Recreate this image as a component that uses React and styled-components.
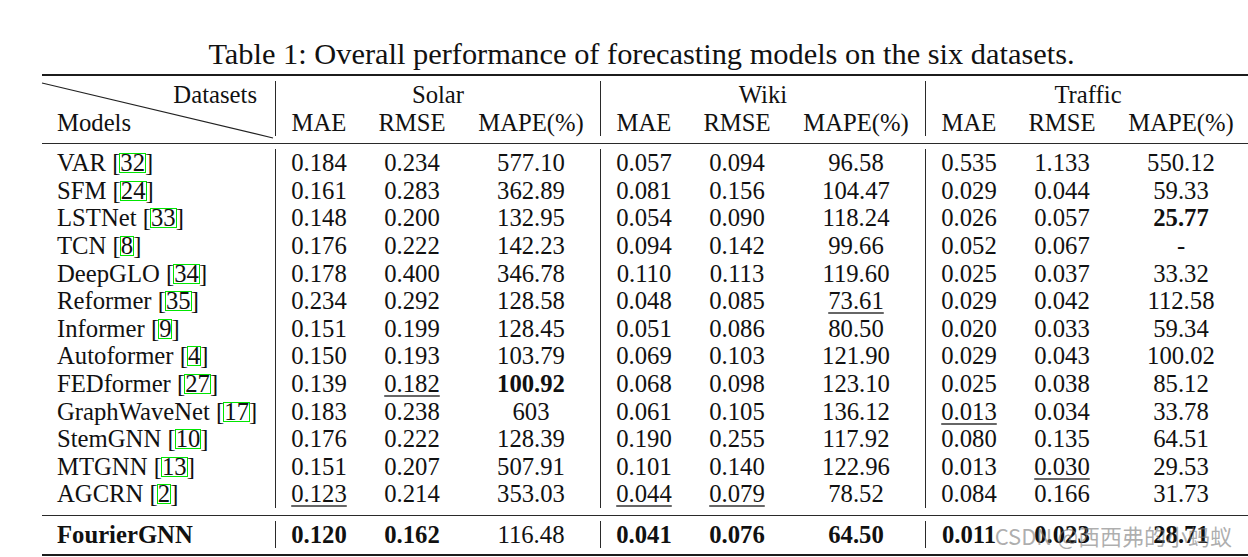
import React from 'react';
import styled, { createGlobalStyle } from 'styled-components';

const GlobalStyle = createGlobalStyle`
  html, body {
    margin: 0;
    padding: 0;
    background: #fff;
    overflow: hidden;
  }
`;

const COLS = '233px repeat(3, 87px 100px 138px)';
const ROW_H = 27.6;

const rows = [
  ['VAR', '32', '0.184', '0.234', '577.10', '0.057', '0.094', '96.58', '0.535', '1.133', '550.12'],
  ['SFM', '24', '0.161', '0.283', '362.89', '0.081', '0.156', '104.47', '0.029', '0.044', '59.33'],
  ['LSTNet', '33', '0.148', '0.200', '132.95', '0.054', '0.090', '118.24', '0.026', '0.057', '*25.77'],
  ['TCN', '8', '0.176', '0.222', '142.23', '0.094', '0.142', '99.66', '0.052', '0.067', '-'],
  ['DeepGLO', '34', '0.178', '0.400', '346.78', '0.110', '0.113', '119.60', '0.025', '0.037', '33.32'],
  ['Reformer', '35', '0.234', '0.292', '128.58', '0.048', '0.085', '_73.61', '0.029', '0.042', '112.58'],
  ['Informer', '9', '0.151', '0.199', '128.45', '0.051', '0.086', '80.50', '0.020', '0.033', '59.34'],
  ['Autoformer', '4', '0.150', '0.193', '103.79', '0.069', '0.103', '121.90', '0.029', '0.043', '100.02'],
  ['FEDformer', '27', '0.139', '_0.182', '*100.92', '0.068', '0.098', '123.10', '0.025', '0.038', '85.12'],
  ['GraphWaveNet', '17', '0.183', '0.238', '603', '0.061', '0.105', '136.12', '_0.013', '0.034', '33.78'],
  ['StemGNN', '10', '0.176', '0.222', '128.39', '0.190', '0.255', '117.92', '0.080', '0.135', '64.51'],
  ['MTGNN', '13', '0.151', '0.207', '507.91', '0.101', '0.140', '122.96', '0.013', '_0.030', '29.53'],
  ['AGCRN', '2', '_0.123', '0.214', '353.03', '_0.044', '_0.079', '78.52', '0.084', '0.166', '31.73'],
];

const ours = ['*0.120', '*0.162', '116.48', '*0.041', '*0.076', '*64.50', '*0.011', '*0.023', '*28.71'];

const datasets = ['Solar', 'Wiki', 'Traffic'];
const metrics = ['MAE', 'RMSE', 'MAPE(%)'];

const Page = styled.div`
  position: relative;
  box-sizing: border-box;
  width: 1248px;
  height: 557px;
  padding: 39px 0 0 42px;
  font-family: "Liberation Serif", "Times New Roman", serif;
  color: #111;
`;

const Table = styled.div`
  width: 1208px;
  display: flex;
  flex-direction: column;
`;

const Caption = styled.div`
  width: 1199px;
  text-align: center;
  font-size: 30.4px;
  line-height: 31px;
  margin-bottom: 4px;
`;

const Rule = styled.div`
  height: ${p => p.$h}px;
  background: ${p => p.$h > 1 ? '#1c1c1c' : '#2a2a2a'};
`;

const Section = styled.div`
  display: grid;
  grid-template-columns: ${COLS};
  grid-auto-rows: ${ROW_H}px;
  padding: ${p => p.$pt}px 0 ${p => p.$pb}px;
  font-size: 24.7px;
  line-height: ${ROW_H}px;
`;

const Cell = styled.div`
  grid-column: span ${p => p.$span || 1};
  text-align: ${p => p.$align || 'center'};
  padding-left: ${p => p.$align === 'left' ? 15 : 0}px;
  font-weight: ${p => p.$bold ? 700 : 400};
  border-left: ${p => p.$divider ? '1px solid #2a2a2a' : 'none'};
  white-space: nowrap;
`;

const Corner = styled.div`
  grid-row: span 2;
  position: relative;
  display: grid;
  grid-template-rows: ${ROW_H}px ${ROW_H}px;
`;

const Diagonal = styled.svg`
  position: absolute;
  left: 0;
  top: 0;
  overflow: visible;
  pointer-events: none;
`;

const CornerTop = styled.span`
  justify-self: end;
  padding-right: 18px;
`;

const CornerBottom = styled.span`
  justify-self: start;
  padding-left: 15px;
`;

const Cite = styled.span`
  display: inline-block;
  line-height: 18px;
  border: 1px solid #00e600;
  margin: 0 -1px;
`;

const Under = styled.span`
  text-decoration: underline;
  text-decoration-thickness: 1.5px;
  text-decoration-color: #666;
  text-underline-offset: 3px;
`;

const Watermark = styled.div`
  position: absolute;
  right: 16px;
  top: 522px;
  font-family: "Noto Sans CJK SC", "Noto Sans", sans-serif;
  font-size: 22px;
  line-height: 26px;
  color: rgba(120, 120, 120, 0.6);
  white-space: nowrap;
`;

const Value = ({ raw, divider }) => {
  const bold = raw.startsWith('*');
  const under = raw.startsWith('_');
  const text = bold || under ? raw.slice(1) : raw;
  return (
    <Cell $bold={bold} $divider={divider}>
      {under ? <Under>{text}</Under> : text}
    </Cell>
  );
};

const ValueRow = ({ values }) =>
  values.map((v, i) => <Value key={i} raw={v} divider={i % 3 === 0} />);

export default function App() {
  return (
    <>
      <GlobalStyle />
      <Page>
        <Table>
          <Caption>Table 1: Overall performance of forecasting models on the six datasets.</Caption>
          <Rule $h={2} />
          <Section $pt={5} $pb={6.8}>
            <Corner>
              <Diagonal width="233" height="55">
                <line x1="0" y1="2" x2="231" y2="57" stroke="#222" strokeWidth="1.2" />
              </Diagonal>
              <CornerTop>Datasets</CornerTop>
              <CornerBottom>Models</CornerBottom>
            </Corner>
            {datasets.map(d => (
              <Cell key={d} $span={3} $divider>{d}</Cell>
            ))}
            {datasets.map(d =>
              metrics.map((m, i) => (
                <Cell key={d + m} $divider={i === 0}>{m}</Cell>
              ))
            )}
          </Section>
          <Rule $h={1} />
          <Section $pt={5.2} $pb={7}>
            {rows.map(([name, ref, ...vals]) => (
              <React.Fragment key={name}>
                <Cell $align="left">
                  {name} [<Cite>{ref}</Cite>]
                </Cell>
                <ValueRow values={vals} />
              </React.Fragment>
            ))}
          </Section>
          <Rule $h={1} />
          <Section $pt={5} $pb={5.4}>
            <Cell $align="left" $bold>FourierGNN</Cell>
            <ValueRow values={ours} />
          </Section>
          <Rule $h={2} />
        </Table>
        <Watermark>CSDN @西西弗的小蚂蚁</Watermark>
      </Page>
    </>
  );
}
